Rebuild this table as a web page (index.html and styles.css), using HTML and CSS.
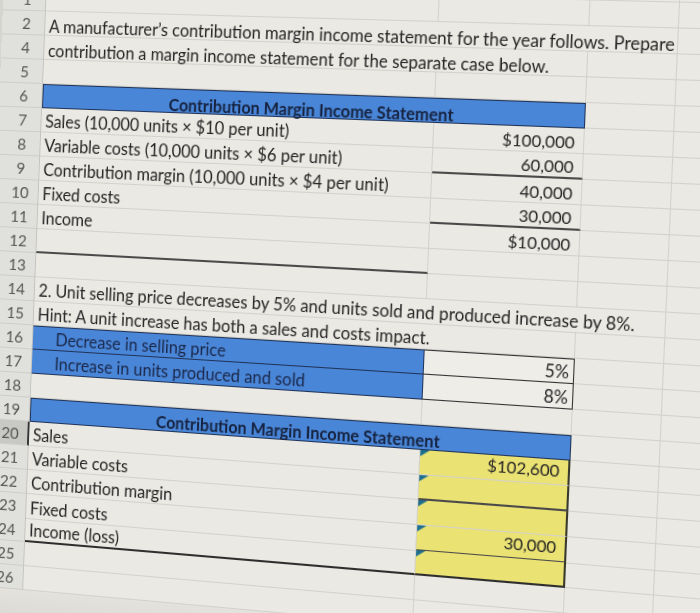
FILE: index.html
```html
<!DOCTYPE html>
<html lang="en">
<head>
<meta charset="utf-8">
<title>Contribution Margin Income Statement</title>
<link rel="stylesheet" href="styles.css">
</head>
<body>
<div class="sheet">
  <div class="row filler"><div class="c rh"></div><div class="c"></div><div class="c"></div><div class="c"></div><div class="c"></div></div>
  <div class="row"><div class="c rh">1</div><div class="c"></div><div class="c"></div><div class="c"></div><div class="c"></div></div>
  <div class="row"><div class="c rh">2</div><div class="c span3 intro">A manufacturer’s contribution margin income statement for the year follows. Prepare</div><div class="c"></div></div>
  <div class="row"><div class="c rh">4</div><div class="c span2 intro">contribution a margin income statement for the separate case below.</div><div class="c"></div><div class="c"></div></div>
  <div class="row"><div class="c rh">5</div><div class="c"></div><div class="c"></div><div class="c"></div><div class="c"></div></div>
  <div class="row"><div class="c rh">6</div><div class="c span2 band low">Contribution Margin Income Statement</div><div class="c"></div><div class="c"></div></div>
  <div class="row"><div class="c rh">7</div><div class="c">Sales (10,000 units × $10 per unit)</div><div class="c num">$100,000</div><div class="c"></div><div class="c"></div></div>
  <div class="row"><div class="c rh">8</div><div class="c">Variable costs (10,000 units × $6 per unit)</div><div class="c num ul">60,000</div><div class="c"></div><div class="c"></div></div>
  <div class="row"><div class="c rh">9</div><div class="c">Contribution margin (10,000 units × $4 per unit)</div><div class="c num">40,000</div><div class="c"></div><div class="c"></div></div>
  <div class="row"><div class="c rh">10</div><div class="c">Fixed costs</div><div class="c num ul">30,000</div><div class="c"></div><div class="c"></div></div>
  <div class="row"><div class="c rh">11</div><div class="c">Income</div><div class="c num">$10,000</div><div class="c"></div><div class="c"></div></div>
  <div class="row"><div class="c rh">12</div><div class="c ul"></div><div class="c"></div><div class="c"></div><div class="c"></div></div>
  <div class="row"><div class="c rh">13</div><div class="c"></div><div class="c"></div><div class="c"></div><div class="c"></div></div>
  <div class="row"><div class="c rh">14</div><div class="c span3">2. Unit selling price decreases by 5% and units sold and produced increase by 8%.</div><div class="c"></div></div>
  <div class="row"><div class="c rh">15</div><div class="c span2">Hint: A unit increase has both a sales and costs impact.</div><div class="c"></div><div class="c"></div></div>
  <div class="row"><div class="c rh">16</div><div class="c blue first">Decrease in selling price</div><div class="c pct box boxtop">5%</div><div class="c"></div><div class="c"></div></div>
  <div class="row"><div class="c rh">17</div><div class="c blue">Increase in units produced and sold</div><div class="c pct box">8%</div><div class="c"></div><div class="c"></div></div>
  <div class="row"><div class="c rh">18</div><div class="c"></div><div class="c"></div><div class="c"></div><div class="c"></div></div>
  <div class="row"><div class="c rh">19</div><div class="c span2 band">Contribution Margin Income Statement</div><div class="c"></div><div class="c"></div></div>
  <div class="row"><div class="c rh sel">20</div><div class="c">Sales</div><div class="c num yel">$102,600</div><div class="c"></div><div class="c"></div></div>
  <div class="row"><div class="c rh">21</div><div class="c">Variable costs</div><div class="c num yel ul"></div><div class="c"></div><div class="c"></div></div>
  <div class="row"><div class="c rh">22</div><div class="c">Contribution margin</div><div class="c num yel"></div><div class="c"></div><div class="c"></div></div>
  <div class="row"><div class="c rh">23</div><div class="c">Fixed costs</div><div class="c num yel ul">30,000</div><div class="c"></div><div class="c"></div></div>
  <div class="row"><div class="c rh">24</div><div class="c total">Income (loss)</div><div class="c num yel total"></div><div class="c"></div><div class="c"></div></div>
  <div class="row"><div class="c rh">25</div><div class="c"></div><div class="c"></div><div class="c"></div><div class="c"></div></div>
  <div class="row"><div class="c rh">26</div><div class="c"></div><div class="c"></div><div class="c"></div><div class="c"></div></div>
  <div class="foot"></div>
</div>
</body>
</html>
```

FILE: styles.css
```css
* {
  box-sizing: border-box;
}

html,
body {
  margin: 0;
  padding: 0;
}

body {
  width: 700px;
  height: 613px;
  overflow: hidden;
  background: #d6d4cf;
  font-family: Lato, "Liberation Sans", sans-serif;
  font-size: 16.8px;
  color: #242424;
}

.sheet {
  width: 860px;
  background: #ebe9e3;
  transform-origin: 0 0;
  transform: matrix3d(0.932866, 0.024196, 0, -0.00010238,
                      -0.039151, 1.00489, 0, 0.0000073825,
                      0, 0, 1, 0,
                      8.7852, -0.66621, 0, 1)
             translate(-6px, -30px);
}

.row {
  display: grid;
  grid-template-columns: 46px 400px 145px 84px 185px;
  height: 24px;
}

.row.filler {
  height: 17px;
}

.foot {
  height: 60px;
  background: linear-gradient(#e4e2dc, #d2d0cb);
}

.c {
  position: relative;
  display: flex;
  align-items: flex-end;
  padding: 0 4px;
  line-height: 20px;
  white-space: nowrap;
  border-right: 1px solid #d3d1cb;
  border-bottom: 1px solid #d3d1cb;
}

.rh {
  justify-content: center;
  align-items: center;
  padding: 0 0 0 7px;
  font-size: 16px;
  color: #555555;
  background: #e0e0dd;
  border-right: 1px solid #c3c3c0;
  border-bottom: 1px solid #cdcdca;
}

.rh.sel {
  background: #c8c8c5;
  border-right: 2px solid #333333;
}

.span2 {
  grid-column: span 2;
}

.span3 {
  grid-column: span 3;
}

.intro {
  line-height: 16px;
}

.band {
  justify-content: center;
  padding-left: 10px;
  line-height: 16px;
  font-size: 16.4px;
  font-weight: 700;
  color: #16233f;
  background: #4a86d8;
  border: 1px solid #1f3358;
}

.band.low {
  line-height: 15px;
}

.num {
  justify-content: flex-end;
  padding-right: 8px;
  font-size: 16.2px;
}

.ul {
  border-bottom: 2px solid #4a4a4a;
}

.blue {
  padding-left: 24px;
  color: #1a2748;
  background: #4a86d8;
  border-right: 1px solid #1f3358;
  border-bottom: 1px solid #1f3358;
}

.blue.first {
  border-top: 1px solid #1f3358;
}

.pct {
  justify-content: flex-end;
  padding-right: 4px;
}

.box {
  background: #eeede8;
  border-right: 1px solid #2f2f2f;
  border-bottom: 1px solid #2f2f2f;
}

.boxtop {
  border-top: 1px solid #2f2f2f;
}

.yel {
  align-items: center;
  padding-bottom: 3px;
  background: #ebe274;
  border-right: 2px solid #3a3a2c;
}

.yel::before {
  content: "";
  position: absolute;
  left: 0;
  top: 0;
  border-top: 6px solid #1d6f8e;
  border-right: 9px solid transparent;
}

.total {
  border-bottom: 2px solid #2e2e2e;
}
```
